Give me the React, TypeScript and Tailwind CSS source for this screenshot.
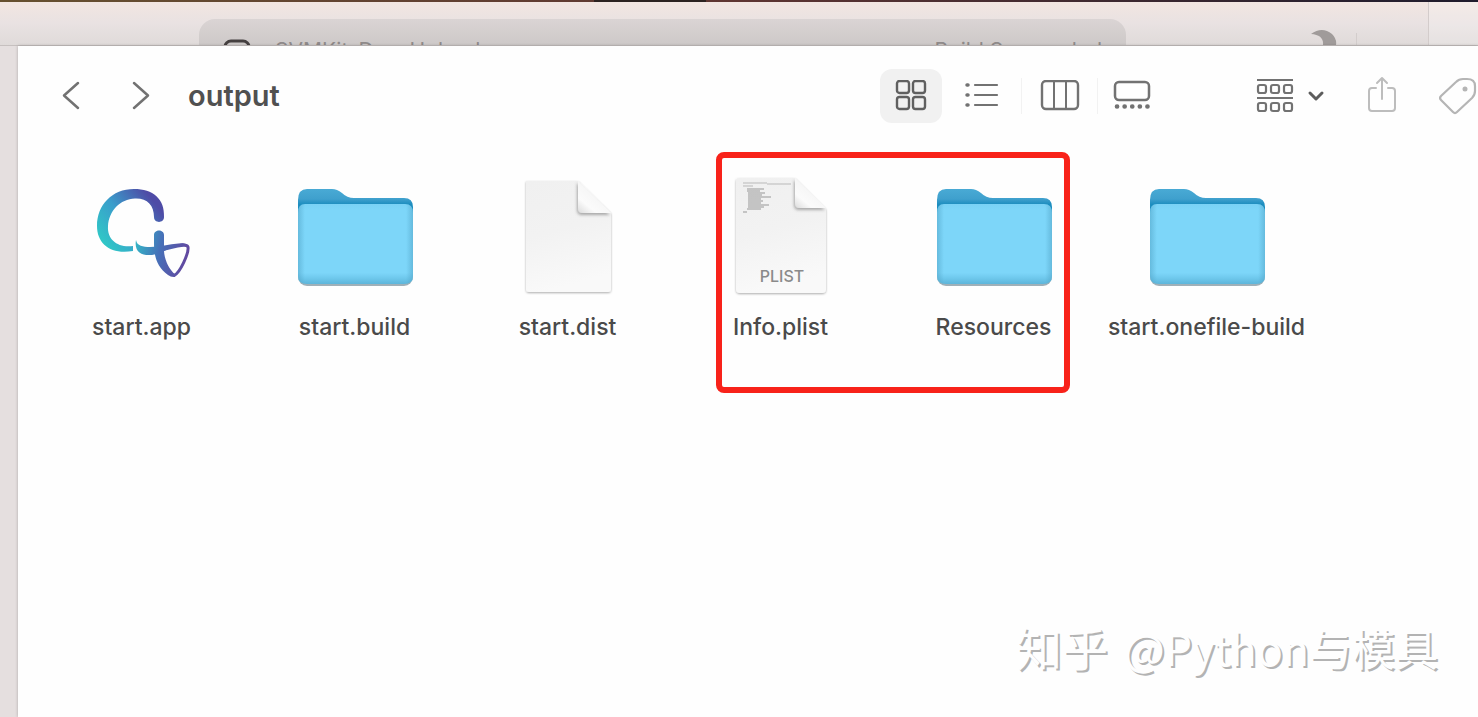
import type { ReactNode } from "react";

function AppIcon() {
  return (
    <svg viewBox="0 2 100 100" className="h-[100px] w-[100px]" fill="none" strokeLinecap="round" aria-hidden="true">
      <defs>
        <linearGradient id="ring" x1="12" y1="64" x2="66" y2="22" gradientUnits="userSpaceOnUse">
          <stop offset="0" stopColor="#2fcbc6" />
          <stop offset="0.5" stopColor="#3a9dcb" />
          <stop offset="1" stopColor="#4e4ba6" />
        </linearGradient>
        <linearGradient id="loop" x1="44" y1="60" x2="96" y2="72" gradientUnits="userSpaceOnUse">
          <stop offset="0" stopColor="#35b3c6" />
          <stop offset="0.45" stopColor="#4670b8" />
          <stop offset="1" stopColor="#63479f" />
        </linearGradient>
      </defs>
      <path d="M72 32C73 14 61 4 42 4C20 4 5 20 5 41C5 59 19 70 41 66L41 61C26 63 15 55 16 41C17 26 28 14 43 13.500C55 13 62 20 62 32C62 38.500 72 38.500 72 32Z" fill="url(#ring)" />
      <path d="M67 53C66 71 68 84 82 90.500C88 88 97 68 96 62C94 57 79 63 66 66" stroke="url(#loop)" strokeWidth="3" strokeLinejoin="round" />
      <path d="M62 50C62 44 72 44 72 50L72 66C72.500 75 77 84 83 89.500C85 92 80 93 76 90C65 82 62 72 62 58Z" fill="url(#loop)" />
      <path d="M44 55C45 61 51 62 58 62C70 62 80 58 94 58C85 61 78 63 70 67C57 73 41 71 44 55Z" fill="url(#loop)" />
    </svg>
  );
}

function FolderIcon() {
  return (
    <svg viewBox="0 -1 120 100" className="h-[100px] w-[120px]" aria-hidden="true">
      <defs>
        <linearGradient id="folderBack" x1="0" y1="2" x2="0" y2="20" gradientUnits="userSpaceOnUse">
          <stop offset="0" stopColor="#48a9d4" />
          <stop offset="0.5" stopColor="#3fa0cd" />
          <stop offset="0.8" stopColor="#1c8dbf" />
        </linearGradient>
        <linearGradient id="folderFront" x1="0" y1="0" x2="0" y2="1">
          <stop offset="0" stopColor="#79d1f5" />
          <stop offset="0.08" stopColor="#7dd6f9" />
          <stop offset="0.86" stopColor="#7dd6f9" />
          <stop offset="0.92" stopColor="#70caee" />
          <stop offset="1" stopColor="#5db5da" />
        </linearGradient>
        <linearGradient id="folderEdge" x1="0" y1="0" x2="1" y2="0">
          <stop offset="0" stopColor="#4d9fc2" stopOpacity="0.5" />
          <stop offset="0.06" stopColor="#4d9fc2" stopOpacity="0" />
          <stop offset="0.94" stopColor="#4d9fc2" stopOpacity="0" />
          <stop offset="1" stopColor="#4d9fc2" stopOpacity="0.5" />
        </linearGradient>
      </defs>
      <rect x="3" y="20" width="115" height="78" rx="9" fill="#9fb0b8" />
      <path d="M3 12Q3 1 12 1H37Q42 1 47 5Q52 10 59 10H109Q118 10 118 19V60H3Z" fill="url(#folderBack)" />
      <path d="M3 25Q3 16 10 16H110Q118 16 118 25V88Q118 96 109 96H12Q3 96 3 88Z" fill="url(#folderFront)" />
      <path d="M3 25Q3 16 10 16H110Q118 16 118 25V88Q118 96 109 96H12Q3 96 3 88Z" fill="url(#folderEdge)" />
    </svg>
  );
}

function PaperDefs() {
  return (
    <defs>
      <linearGradient id="paper" x1="0" y1="0" x2="0.2" y2="1">
        <stop offset="0" stopColor="#f0f0f0" />
        <stop offset="0.5" stopColor="#f2f2f2" />
        <stop offset="1" stopColor="#f9f9f9" />
      </linearGradient>
      <linearGradient id="fold" x1="0" y1="1" x2="0.6" y2="0.3">
        <stop offset="0" stopColor="#dcdcdc" />
        <stop offset="0.4" stopColor="#fbfbfb" />
        <stop offset="1" stopColor="#f4f4f4" />
      </linearGradient>
      <filter id="paperShadow" x="-10%" y="-10%" width="120%" height="120%">
        <feDropShadow dx="0" dy="1" stdDeviation="1.2" floodColor="#000" floodOpacity="0.32" />
      </filter>
      <filter id="foldShadow" x="-20%" y="-20%" width="140%" height="150%">
        <feDropShadow dx="-1" dy="2" stdDeviation="1.5" floodColor="#000" floodOpacity="0.3" />
      </filter>
    </defs>
  );
}

function BlankFileIcon() {
  return (
    <svg viewBox="0 0 94 120" className="h-[120px] w-[94px]" aria-hidden="true">
      <PaperDefs />
      <path d="M5 4H57L90 36V112Q90 115 87 115H8Q5 115 5 112Z" fill="url(#paper)" filter="url(#paperShadow)" />
      <path d="M57 4V31Q57 36 62 36H90Z" fill="url(#fold)" filter="url(#foldShadow)" />
    </svg>
  );
}

function PlistFileIcon() {
  return (
    <svg viewBox="0 1 100 124" className="h-[124px] w-[100px]" aria-hidden="true">
      <PaperDefs />
      <path d="M5 7Q5 4 8 4H64L95 35V115Q95 119 91 119H9Q5 119 5 115Z" fill="url(#paper)" filter="url(#paperShadow)" />
      <g stroke="#b9b9b9" strokeWidth="1">
        <path d="M12 9H36M12 12H22M36 10H60" />
        <path d="M16 15H33M16 17H29M17 19H34M17 21H31M17 23H40M17 25H30M17 27H32M17 29H30M17 31H38M17 33H33M16 35H30M12 38H16" strokeWidth="2" opacity="0.8" />
      </g>
      <path d="M64 4V29Q64 34 69 34H95Z" fill="url(#fold)" filter="url(#foldShadow)" />
      <text x="51" y="108" textAnchor="middle" className="fill-[#8a8a8a] font-['Inter',sans-serif] text-[16px] font-medium">PLIST</text>
    </svg>
  );
}

const files: { name: string; icon: ReactNode }[] = [
  { name: "start.app", icon: <AppIcon /> },
  { name: "start.build", icon: <FolderIcon /> },
  { name: "start.dist", icon: <BlankFileIcon /> },
  { name: "Info.plist", icon: <PlistFileIcon /> },
  { name: "Resources", icon: <FolderIcon /> },
  { name: "start.onefile-build", icon: <FolderIcon /> },
];

function BackgroundWindow() {
  return (
    <div className="bg-linear-to-b from-[#f3e6e1] via-[#e9e2e2] to-[#dfdad9]">
      <div className="flex h-[2px] justify-center bg-linear-to-r from-[#66502f] via-[#5e3431] to-[#1f1b2c]">
        <div className="mr-[178px] w-28 bg-[#2c2220]" />
      </div>
      <div className="flex h-11 items-end overflow-hidden border-b border-[#c6c0bf]">
        <div className="ml-[199px] flex h-[26px] w-[927px] items-start overflow-hidden rounded-t-2xl bg-linear-to-b from-[#dad4d4] to-[#cdc9c8] pr-6 pl-6 text-[21px] leading-6 text-[#8f8a8a]">
          <svg viewBox="0 0 28 24" className="mt-5 h-6 w-7 shrink-0" fill="none" stroke="#454040" strokeWidth="3" aria-hidden="true">
            <rect x="2" y="2" width="24" height="24" rx="6" />
          </svg>
          <span className="mt-5 ml-6">SVMKit_DocsUploader</span>
          <span className="mt-5 ml-auto">Build Succeeded</span>
        </div>
        <svg viewBox="0 0 30 16" className="ml-[184px] h-4 w-[30px] shrink-0" aria-hidden="true">
          <path d="M1 5Q12 -3 22 5Q27 10 26 16H13Q14 6 1 5Z" fill="#a09b9a" />
        </svg>
        <div className="ml-4 h-3 border-l border-[#d3cdcc]" />
        <div className="ml-auto h-full w-[50px] border-l border-[#d3cccb] bg-white/20" />
      </div>
    </div>
  );
}

function Toolbar() {
  return (
    <header className="flex h-[100px] items-center overflow-hidden pl-[42px] text-[#727272]">
      <button aria-label="Back" className="h-8 w-5">
        <svg viewBox="0 0 20 32" className="h-8 w-5" fill="none" stroke="currentColor" strokeWidth="2.5" strokeLinecap="round" strokeLinejoin="round"><path d="M18 3L4 15.500L18 28" /></svg>
      </button>
      <button aria-label="Forward" className="ml-[52px] h-8 w-5">
        <svg viewBox="0 0 20 32" className="h-8 w-5" fill="none" stroke="currentColor" strokeWidth="2.5" strokeLinecap="round" strokeLinejoin="round"><path d="M2 3L16 15.500L2 28" /></svg>
      </button>
      <h1 className="ml-9 text-[29px] leading-8 font-semibold text-[#505050]">output</h1>
      <div className="ml-auto flex shrink-0 items-center">
        <button aria-label="Icon view" aria-pressed="true" className="flex h-[54px] w-[62px] items-center justify-center rounded-xl bg-[#f1f1f1]">
          <svg viewBox="0 1 32 32" className="h-8 w-8" fill="none" stroke="#606060" strokeWidth="2.4">
            <rect x="2" y="2" width="12" height="12" rx="2.5" /><rect x="18" y="2" width="12" height="12" rx="2.5" />
            <rect x="2" y="18" width="12" height="12" rx="2.5" /><rect x="18" y="18" width="12" height="12" rx="2.5" />
          </svg>
        </button>
        <button aria-label="List view" className="ml-[22px] h-8 w-9">
          <svg viewBox="0 1 36 32" className="h-8 w-9" fill="none" stroke="currentColor" strokeWidth="2.2" strokeLinecap="round">
            <path d="M11 6H33M11 16H33M11 26H33" /><path d="M3 6H4M3 16H4M3 26H4" strokeWidth="3.5" />
          </svg>
        </button>
        <span className="ml-[21px] h-9 border-l border-[#f2f2f2]" />
        <button aria-label="Column view" className="ml-[18px] h-8 w-10">
          <svg viewBox="0 1 40 32" className="h-8 w-10" fill="none" stroke="currentColor" strokeWidth="2.4">
            <rect x="2" y="2" width="36" height="28" rx="4" /><path d="M14 2V30M26 2V30" strokeWidth="2" />
          </svg>
        </button>
        <span className="ml-[17px] h-9 border-l border-[#f2f2f2]" />
        <button aria-label="Gallery view" className="ml-[15px] h-8 w-[38px]">
          <svg viewBox="0 0 38 32" className="h-8 w-[38px]" fill="none" stroke="currentColor" strokeWidth="2.5">
            <rect x="2" y="2" width="34" height="18" rx="4" /><path d="M4 26.500H35" strokeWidth="4.600" strokeLinecap="round" strokeDasharray="0.1 7.500" />
          </svg>
        </button>
        <button aria-label="Group items" className="ml-[104px] flex items-center gap-3">
          <svg viewBox="0 0 40 36" className="h-9 w-10" fill="none" stroke="currentColor" strokeWidth="2.2">
            <path d="M2 2H38M2 20H38" />
            <rect x="3" y="7" width="8" height="8" rx="2" /><rect x="16" y="7" width="8" height="8" rx="2" /><rect x="29" y="7" width="8" height="8" rx="2" />
            <rect x="3" y="25" width="8" height="8" rx="2" /><rect x="16" y="25" width="8" height="8" rx="2" /><rect x="29" y="25" width="8" height="8" rx="2" />
          </svg>
          <svg viewBox="0 0 18 12" className="h-3 w-[18px]" fill="none" stroke="#5c5c5c" strokeWidth="3" strokeLinecap="round" strokeLinejoin="round"><path d="M3 3L9 9L15 3" /></svg>
        </button>
        <button aria-label="Share" className="ml-[41px] h-10 w-8 text-[#bdbdbd]">
          <svg viewBox="0 0 32 40" className="h-10 w-8" fill="none" stroke="currentColor" strokeWidth="2" strokeLinecap="round" strokeLinejoin="round">
            <path d="M10 12H6Q3 12 3 15V32Q3 35 6 35H26Q29 35 29 32V15Q29 12 26 12H22M16 23V2M11 7L16 2L21 7" />
          </svg>
        </button>
        <button aria-label="Edit tags" className="ml-10 h-10 w-10 text-[#b5b5b5]">
          <svg viewBox="0 1 40 40" className="h-10 w-10" fill="none" stroke="currentColor" strokeWidth="2.2" strokeLinejoin="round">
            <path d="M3 25Q1 23 3 21L18 7Q21 4 25 4H29Q37 4 37 11V16Q37 20 34 23L19 37Q17 39 15 37Z" /><circle cx="27" cy="14" r="1.4" fill="currentColor" />
          </svg>
        </button>
      </div>
    </header>
  );
}

export default function App() {
  return (
    <div className="flex min-h-screen flex-col overflow-x-hidden bg-[#e5dfdf] font-['Inter','Noto_Sans_CJK_SC',sans-serif]">
      <BackgroundWindow />
      <main className="ml-[18px] flex flex-1 flex-col bg-[#fefefe] shadow-[0_0_3px_rgba(0,0,0,0.25)]">
        <Toolbar />
        <ul className="relative grid grid-cols-[repeat(6,213px)] pt-[25px] pl-[17px]">
          {files.map((file) => (
            <li key={file.name} className="flex flex-col items-center">
              <div className="flex h-[132px] items-center">{file.icon}</div>
              <span className="mt-[10px] text-[23px] leading-7 font-medium whitespace-nowrap text-[#4a4a4a]">{file.name}</span>
            </li>
          ))}
          <li aria-hidden="true" className="pointer-events-none absolute top-[6px] left-[698px] h-[241px] w-[354px] rounded-lg border-[6px] border-[#f8221a]" />
        </ul>
        <p className="mt-auto mr-10 mb-11 flex items-baseline gap-4 self-end font-['Noto_Sans_CJK_SC',sans-serif] text-[43px] leading-[52px] text-[#fefefe] [text-shadow:2px_2px_0_#b3b3b3]">
          <span className="text-[46px]">知乎</span>
          <span>@Python与模具</span>
        </p>
      </main>
    </div>
  );
}
